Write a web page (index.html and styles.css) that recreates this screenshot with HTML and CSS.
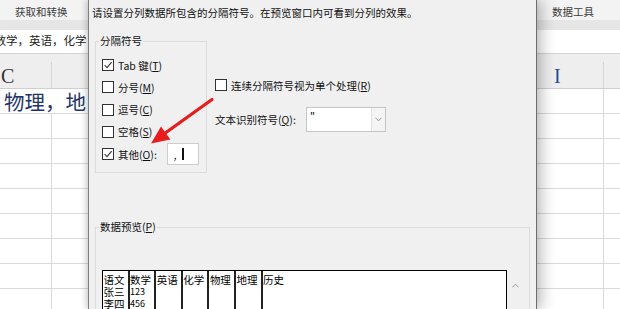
FILE: index.html
```html
<!DOCTYPE html>
<html lang="zh-CN">
<head>
<meta charset="utf-8">
<title>文本分列向导</title>
<link rel="stylesheet" href="styles.css">
</head>
<body>
<div class="screen">
  <section class="sheet sheet-left">
    <div class="ribbon">获取和转换</div>
    <div class="band"></div>
    <div class="fbar"><span class="fbar-text">数学，英语，化学</span></div>
    <div class="colhead"><div class="hcell hcell-a">C</div><div class="hcell"></div></div>
    <div class="row row-spill"><div class="cell-a"><span class="cell-text">物理，地</span></div></div>
    <div class="row"><div class="cell-a"></div></div>
    <div class="row"><div class="cell-a"></div></div>
    <div class="row"><div class="cell-a"></div></div>
    <div class="row"><div class="cell-a"></div></div>
    <div class="row"><div class="cell-a"></div></div>
    <div class="row"><div class="cell-a"></div></div>
    <div class="row"><div class="cell-a"></div></div>
    <div class="row"><div class="cell-a"></div></div>
  </section>

  <section class="dialog">
    <div class="intro">请设置分列数据所包含的分隔符号。在预览窗口内可看到分列的效果。</div>
    <div class="options">
      <fieldset class="group group-delim">
        <legend>分隔符号</legend>
        <div class="checks">
          <div class="check"><span class="box"><svg viewBox="0 0 10 10"><polyline points="1.6,5 4,7.6 8.6,2.2"/></svg></span><span>Tab 键(<u>T</u>)</span></div>
          <div class="check"><span class="box"></span><span>分号(<u>M</u>)</span></div>
          <div class="check"><span class="box"></span><span>逗号(<u>C</u>)</span></div>
          <div class="check"><span class="box"></span><span>空格(<u>S</u>)</span></div>
          <div class="check"><span class="box"><svg viewBox="0 0 10 10"><polyline points="1.6,5 4,7.6 8.6,2.2"/></svg></span><span>其他(<u>O</u>):</span><span class="other-input"><span class="comma">,</span><span class="caret"></span></span></div>
        </div>
      </fieldset>
      <div class="side">
        <div class="check consec"><span class="box"></span><span>连续分隔符号视为单个处理(<u>R</u>)</span></div>
        <div class="quote">
          <span class="quote-label">文本识别符号(<u>Q</u>):</span>
          <span class="combo"><span class="combo-value">"</span><span class="combo-btn"><svg viewBox="0 0 8 5"><polyline points="0.5,0.5 4,4 7.5,0.5"/></svg></span></span>
        </div>
      </div>
    </div>
    <fieldset class="group group-preview">
      <legend>数据预览(<u>P</u>)</legend>
      <div class="preview-wrap">
        <div class="preview">
          <div class="pcol"><div>语文</div><div>张三</div><div>李四</div></div>
          <div class="pcol"><div>数学</div><div class="num">123</div><div class="num">456</div></div>
          <div class="pcol"><div>英语</div></div>
          <div class="pcol"><div>化学</div></div>
          <div class="pcol"><div>物理</div></div>
          <div class="pcol"><div>地理</div></div>
          <div class="pcol pcol-last"><div>历史</div></div>
        </div>
        <div class="scroll"><svg viewBox="0 0 8 5"><polyline points="0.5,4.5 4,1 7.5,4.5"/></svg></div>
      </div>
    </fieldset>
  </section>

  <section class="sheet sheet-right">
    <div class="ribbon">数据工具</div>
    <div class="band"></div>
    <div class="fbar"></div>
    <div class="colhead"><div class="hcell hcell-a">I</div><div class="hcell"></div></div>
    <div class="row"><div class="cell-a"></div></div>
    <div class="row"><div class="cell-a"></div></div>
    <div class="row"><div class="cell-a"></div></div>
    <div class="row"><div class="cell-a"></div></div>
    <div class="row"><div class="cell-a"></div></div>
    <div class="row"><div class="cell-a"></div></div>
    <div class="row"><div class="cell-a"></div></div>
    <div class="row"><div class="cell-a"></div></div>
    <div class="row"><div class="cell-a"></div></div>
  </section>

  <svg class="arrow" viewBox="0 0 620 309" width="620" height="309">
    <line x1="212" y1="99.5" x2="166" y2="132.5"/>
    <polygon points="151,143.5 161,126.6 170.4,139.4"/>
  </svg>
</div>
</body>
</html>
```

FILE: styles.css
```css
* { box-sizing: border-box; }
html, body { margin: 0; padding: 0; }
body {
  width: 620px;
  height: 309px;
  overflow: hidden;
  background: #fff;
  font-family: "Noto Sans CJK SC", "Noto Sans", sans-serif;
  font-size: 10.5px;
  color: #000;
}
u { text-decoration: underline; text-underline-offset: 1px; }

.screen {
  position: relative;
  display: grid;
  grid-template-columns: 88px 449px 83px;
  height: 309px;
}

/* spreadsheet behind the dialog */
.sheet {
  overflow: hidden;
  background: #fff;
  display: flex;
  flex-direction: column;
}
.ribbon {
  height: 20px;
  flex: none;
  background: #f3f3f3;
  color: #3c3c3c;
  line-height: 14px;
  padding: 5px 0 0 15px;
  white-space: nowrap;
}
.band { height: 10px; flex: none; background: #e6e6e6; }
.fbar {
  height: 24px;
  flex: none;
  border-bottom: 1px solid #d4d4d4;
  white-space: nowrap;
  font-size: 11.5px;
  line-height: 16px;
  padding-top: 2px;
  color: #222;
}
.fbar-text { display: block; margin-left: -5.5px; }
.colhead {
  height: 35px;
  flex: none;
  background: #eeeeee;
  border-bottom: 1px solid #cfcfcf;
  padding-top: 8px;
  display: flex;
}
.hcell {
  height: 26px;
  font-family: "Liberation Serif", serif;
  font-size: 20px;
  line-height: 28px;
  color: #333;
  white-space: nowrap;
}
.hcell-a { width: 52px; flex: none; border-right: 1px solid #d6d6d6; padding-left: 1px; }
.sheet-right .hcell-a { width: 67px; padding-left: 17px; color: #1e4a9a; }
.row {
  height: 25px;
  flex: none;
  border-bottom: 1px solid #dadada;
  display: flex;
}
.cell-a { width: 52px; flex: none; border-right: 1px solid #dadada; }
.sheet-right .cell-a { width: 67px; }
.row-spill .cell-a { border-right-color: transparent; white-space: nowrap; }
.cell-text {
  display: block;
  padding-left: 4px;
  font-size: 20.5px;
  line-height: 24px;
  color: #1f3566;
}

/* dialog */
.dialog {
  position: relative;
  z-index: 1;
  background: #f0f0f0;
  border-left: 1px solid #7d7d7d;
  border-right: 1px solid #6e6e6e;
  box-shadow: 6px 0 12px rgba(0,0,0,.22), -2px 0 6px rgba(0,0,0,.16);
  overflow: hidden;
}
.intro {
  padding: 6px 0 0 3px;
  line-height: 14px;
  white-space: nowrap;
  color: #111;
}
.options {
  display: flex;
  margin: 14px 0 0 6px;
}
.group {
  margin: 0;
  padding: 0;
  border: 1px solid #dcdcdc;
  min-inline-size: 0;
}
.group legend {
  margin-left: 3px;
  padding: 0 1px;
  line-height: 14px;
  color: #111;
}
.group-delim { width: 112px; flex: none; }
.checks { padding: 6px 0 6.5px 6px; }
.check {
  height: 22.25px;
  display: flex;
  align-items: center;
  white-space: nowrap;
  color: #111;
}
.box {
  width: 12px;
  height: 12px;
  flex: none;
  border: 1px solid #333;
  background: #fff;
  margin-right: 4px;
  display: flex;
}
.box svg { width: 10px; height: 10px; }
.box polyline { fill: none; stroke: #333; stroke-width: 1.1; }
.other-input {
  width: 32px;
  height: 22px;
  margin-left: 10px;
  background: #fff;
  border: 1px solid #cdcdcd;
  display: flex;
  align-items: center;
  padding-left: 6px;
}
.comma { font-size: 10px; line-height: 10px; margin-top: 2px; }
.caret { width: 2px; height: 12px; background: #111; margin-left: 5px; }

.side { margin-left: 8px; padding-top: 44px; }
.consec { height: 14px; }
.quote { display: flex; align-items: center; margin-top: 15px; }
.quote-label { width: 91px; flex: none; white-space: nowrap; color: #111; }
.combo {
  width: 80px;
  height: 25px;
  border: 1px solid #c6c6c6;
  background: #fff;
  display: flex;
}
.combo-value { flex: 1; padding: 2px 0 0 3px; line-height: 14px; }
.combo-btn {
  width: 14px;
  border-left: 1px solid #e2e2e2;
  background: #f4f4f4;
  display: flex;
  align-items: center;
  justify-content: center;
}
.combo-btn svg, .scroll svg { width: 7px; height: 5px; }
.combo-btn polyline, .scroll polyline { fill: none; stroke: #8a8a8a; stroke-width: 1; }

.group-preview {
  width: 435px;
  margin: 47.5px 0 0 6px;
  height: 160px;
}
.preview-wrap { display: flex; padding: 36px 0 0 6px; }
.preview {
  width: 405px;
  height: 60px;
  flex: none;
  border: 1px solid #000;
  background: #fff;
  display: flex;
}
.pcol {
  width: 26.6px;
  flex: none;
  border-right: 2px solid #222;
  padding: 3px 0 0 0.5px;
  line-height: 11.7px;
  white-space: nowrap;
  overflow: hidden;
}
.pcol-last { flex: 1; border-right: 0; }
.num { font-size: 9px; }
.scroll { width: 21px; padding: 6px 0 0 5px; }

/* annotation arrow */
.arrow {
  position: absolute;
  left: 0;
  top: 0;
  z-index: 2;
  pointer-events: none;
}
.arrow line { stroke: #e81c1c; stroke-width: 3.2; stroke-linecap: round; }
.arrow polygon { fill: #e81c1c; }
```
